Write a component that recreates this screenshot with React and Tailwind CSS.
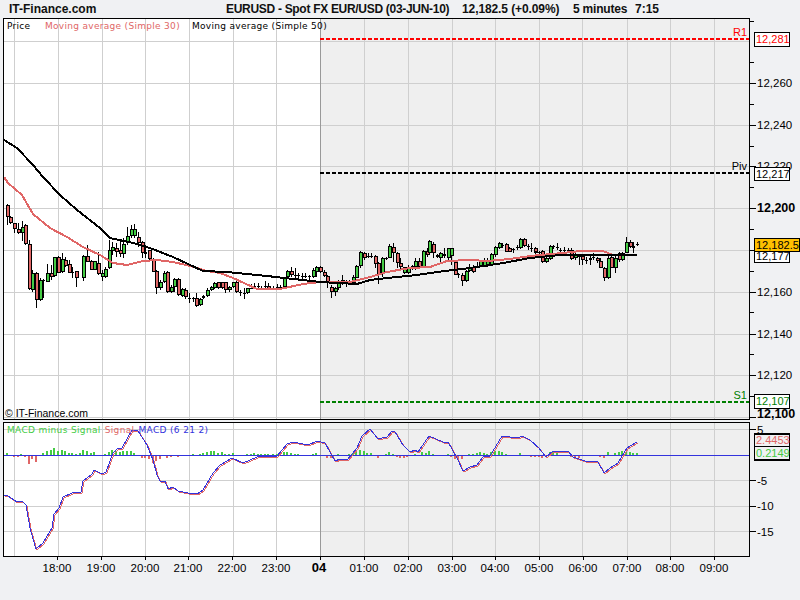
const GREEN = '#44cc44'
const RED = '#e06666'
const BLUE = '#3333dd'

// candles traced from the chart: [x, wickTop, wickBottom, bodyTop, bodyBottom, colour], in 3x crop units
const candlesA = [
  [22,28,90,30,65,'r'],[31,62,88,66,85,'r'],[43,85,115,85,103,'r'],[55,85,118,103,115,'r'],[65,78,138,95,115,'g'],[76,88,150,90,148,'r'],
  [88,135,285,148,283,'r'],[97,225,290,235,285,'g'],[109,230,338,233,316,'r'],[121,250,318,254,316,'g'],[130,252,310,254,258,'g'],[142,207,260,235,260,'g'],
  [154,210,255,235,245,'r'],[163,185,245,187,243,'g'],[175,183,235,187,233,'r'],[185,175,235,192,230,'g'],[196,185,215,194,213,'r'],[208,195,235,208,233,'r'],
  [217,215,250,230,235,'k'],[229,230,275,229,248,'r'],[250,180,258,183,250,'g'],[262,150,202,183,200,'r'],[274,195,225,199,225,'r'],[283,197,225,199,225,'g'],
  [295,172,240,203,236,'r'],[307,225,258,235,245,'g'],[316,215,250,222,245,'g'],[328,135,222,166,220,'g'],[337,140,180,156,168,'g'],[349,145,185,160,170,'r'],
  [361,138,185,166,176,'r'],[370,130,190,147,176,'g'],[382,97,150,124,145,'g'],[394,90,130,103,122,'g'],[403,88,130,103,122,'g'],[415,110,155,127,145,'r'],
  [427,137,190,142,175,'r'],[436,150,190,170,177,'g'],[448,165,200,165,193,'r'],[460,190,232,193,230,'r'],[469,225,298,227,280,'r'],[481,255,285,262,280,'g'],
  [491,228,265,233,260,'g'],[502,228,293,232,290,'r'],[514,270,295,277,290,'g'],[523,250,290,253,275,'g'],[535,250,302,253,300,'r'],[547,280,305,283,302,'g'],
  [556,280,312,285,305,'r'],[568,295,325,310,312,'k'],[580,305,320,310,312,'k'],[589,295,337,310,332,'r'],[601,310,332,313,330,'g'],[610,300,312,304,310,'g'],
  [622,280,305,284,304,'g'],[634,272,288,275,285,'g'],[643,260,282,265,280,'g'],[655,260,282,262,280,'r'],[666,260,282,262,280,'r'],[676,262,295,262,285,'r'],
  [688,272,290,275,285,'g'],[700,260,280,262,275,'g'],[709,255,295,262,292,'r'],[721,285,303,292,294,'k'],[733,280,312,293,295,'k'],[742,278,296,280,295,'g'],
  [754,268,282,278,280,'k'],[763,265,280,272,274,'k'],[775,265,280,272,274,'k'],[784,272,282,278,280,'k'],[796,258,282,272,274,'k'],[805,265,285,272,282,'r'],
]
const candlesB = [
  [8,183,192,188,190,'k'],[20,178,192,185,187,'k'],[31,180,190,185,187,'k'],[43,155,188,157,186,'g'],[52,135,160,138,155,'g'],[64,127,155,138,150,'r'],
  [76,130,158,150,152,'k'],[85,145,162,150,152,'k'],[97,145,165,153,155,'k'],[106,143,160,152,154,'k'],[118,150,168,154,156,'k'],[130,130,160,135,155,'g'],
  [139,122,155,127,140,'g'],[151,122,145,127,140,'r'],[163,135,155,140,152,'r'],[172,150,190,152,175,'r'],[184,180,218,187,200,'r'],[196,185,212,190,200,'g'],
  [205,165,195,175,190,'g'],[217,150,180,165,175,'r'],[229,165,185,172,175,'k'],[238,165,178,170,175,'g'],[250,150,178,157,175,'g'],[259,120,160,123,158,'g'],
  [271,77,130,80,124,'g'],[283,80,105,85,100,'r'],[295,85,100,92,94,'k'],[304,85,100,92,94,'k'],[316,90,130,93,117,'r'],[325,110,178,115,150,'r'],
  [337,95,155,98,145,'g'],[349,95,105,98,100,'k'],[358,58,100,62,98,'g'],[370,55,110,67,85,'r'],[382,80,130,85,115,'r'],[391,100,135,115,125,'r'],
  [403,125,147,125,145,'g'],[415,120,148,125,145,'g'],[427,120,135,122,130,'r'],[436,100,135,107,125,'g'],[448,100,130,107,125,'r'],[460,75,130,77,127,'g'],
  [470,70,95,77,90,'r'],[478,45,90,48,85,'g'],[490,50,100,57,85,'r'],[502,88,100,90,97,'k'],[511,80,112,85,100,'g'],[523,68,98,88,92,'k'],
  [535,68,105,70,100,'g'],[544,68,120,70,92,'g'],[556,108,150,110,150,'r'],[565,145,160,148,150,'k'],[577,145,183,150,168,'r'],[589,135,170,138,168,'g'],
  [598,118,140,125,138,'g'],[610,120,145,125,140,'r'],[622,110,130,122,125,'k'],[631,105,125,108,122,'g'],[643,100,125,107,122,'g'],[652,100,125,108,122,'g'],
  [664,85,122,87,120,'g'],[676,62,95,67,90,'g'],[688,50,72,55,70,'g'],[697,55,70,60,62,'k'],[709,55,82,57,80,'r'],[718,65,82,70,80,'r'],
  [730,70,85,72,74,'k'],[742,60,75,67,70,'k'],[751,40,72,42,70,'g'],[763,38,65,42,62,'r'],[775,58,75,62,64,'k'],[784,62,82,70,72,'k'],[796,65,90,70,85,'r'],
]
const candlesC = [
  [4,55,80,68,70,'k'],[16,68,85,70,82,'r'],[28,78,90,80,82,'k'],[37,75,115,78,112,'r'],[49,90,113,100,112,'g'],[61,60,105,63,103,'g'],
  [70,60,72,63,65,'k'],[82,55,75,65,68,'k'],[91,70,85,75,77,'k'],[103,65,85,75,77,'k'],[115,70,85,75,82,'g'],[124,70,105,75,103,'r'],
  [136,85,105,90,100,'g'],[148,88,120,92,94,'k'],[157,88,120,92,105,'r'],[169,95,118,105,107,'k'],[181,90,120,98,106,'k'],[190,85,105,97,100,'k'],
  [202,95,115,99,108,'r'],[211,100,130,108,128,'r'],[223,125,167,130,160,'r'],[235,90,162,98,160,'g'],[244,90,130,95,130,'r'],[256,90,145,98,130,'g'],
  [268,80,110,85,105,'r'],[277,80,108,85,105,'g'],[289,37,85,52,83,'g'],[301,45,70,52,67,'r'],[310,52,85,63,70,'k'],[322,52,62,58,60,'k'],
]

const toPage = (list, ox, oy) =>
  list.map(([x, a, b, c, d, col]) => ({
    x: Math.round(ox + x / 3),
    wt: Math.round(oy + a / 3),
    wb: Math.round(oy + b / 3),
    bt: Math.round(oy + c / 3),
    bb: Math.round(oy + d / 3),
    col,
  }))

const candles = [
  ...toPage(candlesA, 0, 195),
  ...toPage(candlesB, 270, 225),
  ...toPage(candlesC, 530, 225),
]

const ma50 = '4,140 17,148 33,165 43,177 60,195 77,210 100,228 110,238 133,243 150,248 173,257 203,271 227,272 267,276 320,282 357,284 370,280 387,278 417,275 437,272 470,268 503,263 530,258 560,255 637,255'
const ma30 = '4,177 8,183 22,195 33,214 50,228 67,237 83,247 100,255 113,263 127,265 143,261 157,260 173,262 190,266 207,271 220,273 233,278 257,289 280,289 303,284 320,282 350,282 370,277 387,272 410,268 430,267 447,261 470,260 487,261 510,259 530,256 563,253 580,251 603,251 613,255 637,255'

const macdA = [[12,300],[25,302],[50,320],[65,317],[78,330],[90,400],[108,462],[130,445],[155,400],[163,358],[178,340],[190,305],[215,295],[242,290],[250,258],[275,238],[283,225],[305,237],[318,232],[340,175],[350,163],[365,158],[395,105],[415,108],[440,150],[460,195],[470,240],[480,258],[495,258],[505,282],[520,275],[535,288],[565,295],[590,298],[610,285],[640,235],[660,210],[695,190],[730,205],[770,185],[810,183]]
const macdB = [[22,183],[50,148],[70,140],[115,150],[140,137],[165,145],[195,198],[210,192],[230,195],[260,160],[275,122],[300,103],[325,133],[350,125],[365,108],[375,110],[400,150],[420,170],[435,165],[445,172],[478,122],[520,142],[535,140],[560,190],[578,227],[600,215],[620,210],[640,187],[660,183],[695,122],[745,130],[755,122],[780,135],[800,155]]
const macdC = [[0,180],[25,200],[48,232],[70,212],[115,214],[130,230],[165,243],[205,245],[222,280],[240,263],[265,250],[290,205],[320,185]]
const macd = [
  ...macdA.map(([x, y]) => [x / 3, 395 + y / 3]),
  ...macdB.map(([x, y]) => [270 + x / 3, 395 + y / 3]),
  ...macdC.map(([x, y]) => [530 + x / 3, 380 + y / 3]),
]
  .map(([x, y]) => `${Math.round(x)},${Math.round(y)}`)
  .join(' ')

// histogram bars: [x in crop units, height in px], positive is up
const barsA = [[22,2],[43,-1],[55,-1],[64,1],[76,-1],[88,-8],[97,-3],[109,-6],[130,2],[142,4],[154,5],[163,7],[175,4],[185,5],[196,4],[208,2],[217,2],[229,1],[241,2],[250,5],[262,4],[274,2],[283,3],[316,1],[328,3],[337,5],[349,4],[361,3],[370,4],[382,4],[394,4],[403,2],[427,-2],[436,-2],[448,-3],[460,-7],[469,-5],[481,-3],[502,-2],[514,-1],[535,-1],[580,1],[601,1],[610,2],[622,3],[634,4],[643,4],[655,2],[666,3],[676,1],[688,1],[700,2],[742,1],[754,1],[763,2],[775,1],[784,1],[796,1],[805,1]]
const barsB = [[8,1],[20,1],[43,3],[52,3],[64,2],[76,1],[85,1],[130,1],[139,2],[172,-2],[184,-2],[205,1],[238,1],[250,2],[259,3],[271,5],[283,4],[292,2],[304,2],[325,-2],[349,1],[358,3],[370,1],[382,-1],[391,-2],[403,-2],[412,-1],[436,1],[457,3],[469,2],[478,4],[490,1],[535,1],[544,-1],[556,-3],[565,-4],[577,-3],[598,1],[610,1],[622,2],[631,3],[643,2],[652,1],[664,3],[676,4],[688,4],[697,3],[709,1],[751,2],[796,-1]]
const barsC = [[4,-1],[16,-1],[28,-1],[37,-2],[49,-1],[61,3],[70,3],[82,2],[124,-1],[136,-1],[148,-2],[211,-1],[223,-2],[235,3],[256,2],[268,3],[277,4],[289,3],[301,3],[310,2],[322,2]]
const bars = [
  ...barsA.map(([x, h]) => [Math.round(x / 3), h]),
  ...barsB.map(([x, h]) => [Math.round(270 + x / 3), h]),
  ...barsC.map(([x, h]) => [Math.round(530 + x / 3), h]),
]

const gridX = [14, 58, 102, 145, 189, 233, 276, 364, 408, 452, 495, 539, 582, 627, 670, 714]
const gridY = [41, 83, 125, 166, 208, 250, 292, 334, 375, 417]
const hours = [
  [57, '18:00'], [101, '19:00'], [145, '20:00'], [188, '21:00'], [232, '22:00'], [276, '23:00'],
  [364, '01:00'], [408, '02:00'], [452, '03:00'], [495, '04:00'], [539, '05:00'], [583, '06:00'], [627, '07:00'], [670, '08:00'], [714, '09:00'],
]

function Candle({ c }) {
  const fill = c.col === 'r' ? RED : c.col === 'g' ? GREEN : '#000'
  const tall = c.bb - c.bt > 2
  return (
    <g>
      <rect x={c.x} y={c.wt} width="1" height={c.wb - c.wt} fill="#000" />
      <rect x={c.x - 1} y={c.bt} width={tall ? 4 : 3} height={Math.max(c.bb - c.bt, 1)} fill="#000" />
      {tall && <rect x={c.x} y={c.bt + 1} width="2" height={c.bb - c.bt - 2} fill={fill} />}
    </g>
  )
}

function ValueBox({ className, children }) {
  return (
    <div className={`absolute left-[4px] flex items-center border border-black pl-[1px] text-[11px] leading-none ${className}`}>
      {children}
    </div>
  )
}

export default function App() {
  return (
    <div className="flex h-[600px] w-[800px] flex-col overflow-hidden bg-[#f0f1f3] font-['Liberation_Sans',sans-serif] text-black">
      <header className="flex h-[18px] items-center text-[12px] font-bold leading-none text-[#111]">
        <span className="ml-[9px] w-[217px]">IT-Finance.com</span>
        <span className="w-[236px] tracking-[-0.3px]">EURUSD - Spot FX EUR/USD (03-JUN-10)</span>
        <span className="w-[111px] tracking-[-0.1px]">12,182.5 (+0.09%)</span>
        <span className="w-[62px] tracking-[-0.2px]">5 minutes</span>
        <span>7:15</span>
      </header>

      {/* price pane */}
      <div className="flex pl-[3px]">
        <div className="relative h-[402px] w-[747px] border border-black bg-white">
          <svg className="block h-[400px] w-[745px]" viewBox="4 19 745 400" shapeRendering="crispEdges">
            <rect x="320" y="19" width="429" height="400" fill="#efefef" />
            {gridX.map((x) => <rect key={x} x={x} y="19" width="1" height="400" fill="#cfcfcf" />)}
            {gridY.map((y) => <rect key={y} x="4" y={y} width="745" height="1" fill="#cfcfcf" />)}
            <rect x="320" y="19" width="1" height="400" fill="#999" />
            <line x1="320" x2="749" y1="38.5" y2="38.5" stroke="#ff0000" strokeWidth="2" strokeDasharray="4 2" />
            <line x1="320" x2="749" y1="173" y2="173" stroke="#000" strokeWidth="2" strokeDasharray="4 2" />
            <line x1="320" x2="749" y1="402" y2="402" stroke="#008000" strokeWidth="2" strokeDasharray="4 2" />
            {candles.map((c, i) => <Candle key={i} c={c} />)}
            <polyline points={ma30} fill="none" stroke={RED} strokeWidth="2" />
            <polyline points={ma50} fill="none" stroke="#000" strokeWidth="2" />
          </svg>
          <div className="absolute left-[3px] top-[1px] flex font-['DejaVu_Sans',sans-serif] text-[9px] leading-[12px] tracking-[0.3px]">
            <span className="w-[38px]">Price</span>
            <span className="w-[147px] text-[#e06666]">Moving average (Simple 30)</span>
            <span>Moving average (Simple 50)</span>
          </div>
          <span className="absolute bottom-[0px] left-[1px] text-[10.5px] leading-[12px]">© IT-Finance.com</span>
          <span className="absolute right-[2px] top-[7px] text-[11px] leading-[12px] text-[#ff0000]">R1</span>
          <span className="absolute right-[2px] top-[141px] text-[11px] leading-[12px]">Piv</span>
          <span className="absolute right-[2px] top-[370px] text-[11px] leading-[12px] text-[#008000]">S1</span>
        </div>
        <div className="relative h-[402px] w-[50px]">
          <svg className="block h-[402px] w-[50px]" viewBox="749 18 50 402" shapeRendering="crispEdges">
            {[21, 62, 104, 146, 187, 229, 271, 312, 354, 396].map((y) => <rect key={y} x="749" y={y} width="4" height="1" fill="#000" />)}
            {[83, 125, 166, 208, 250, 292, 334, 375, 417].map((y) => <rect key={y} x="749" y={y} width="6" height="1" fill="#000" />)}
            <g fontSize="11.5" fontFamily="Liberation Sans, sans-serif" shapeRendering="auto">
              <text x="756" y="87">12,260</text>
              <text x="756" y="129">12,240</text>
              <text x="756" y="170">12,220</text>
              <text x="756" y="212" fontSize="12.5" fontWeight="bold">12,200</text>
              <text x="756" y="296">12,160</text>
              <text x="756" y="338">12,140</text>
              <text x="756" y="379">12,120</text>
              <text x="756" y="418" fontSize="12.5" fontWeight="bold">12,100</text>
            </g>
          </svg>
          <ValueBox className="top-[14px] h-[15px] w-[36px] bg-white text-[#ff0000]">12,281</ValueBox>
          <ValueBox className="top-[149px] h-[14px] w-[36px] bg-white">12,217</ValueBox>
          <ValueBox className="top-[232px] h-[13px] w-[36px] bg-white">12,177</ValueBox>
          <ValueBox className="top-[220px] h-[14px] w-[46px] bg-[#ffc000]">12,182.5</ValueBox>
          <ValueBox className="top-[376px] h-[15px] w-[36px] bg-white text-[#008000]">12,107</ValueBox>
        </div>
      </div>

      {/* macd pane */}
      <div className="mt-[2px] flex pl-[3px]">
        <div className="relative h-[135px] w-[747px] border border-black bg-white">
          <svg className="block h-[133px] w-[745px]" viewBox="4 423 745 133" shapeRendering="crispEdges">
            <rect x="320" y="423" width="429" height="133" fill="#efefef" />
            {gridX.map((x) => <rect key={x} x={x} y="423" width="1" height="133" fill="#cfcfcf" />)}
            {[429, 480, 506, 531].map((y) => <rect key={y} x="4" y={y} width="745" height="1" fill="#cfcfcf" />)}
            <rect x="320" y="423" width="1" height="133" fill="#999" />
            {bars.map(([x, h], i) =>
              h > 0
                ? <rect key={i} x={x - 1} y={455 - h} width="2" height={h} fill={GREEN} />
                : <rect key={i} x={x - 1} y="456" width="2" height={-h} fill={RED} />
            )}
            <rect x="4" y="455" width="745" height="1" fill={BLUE} />
            <polyline points={macd} fill="none" stroke={RED} strokeWidth="1" transform="translate(1 1)" />
            <polyline points={macd} fill="none" stroke={BLUE} strokeWidth="1" />
          </svg>
          <div className="absolute left-[3px] top-[1px] flex font-['DejaVu_Sans',sans-serif] text-[9px] leading-[12px] tracking-[0.35px]">
            <span className="mr-[4px] text-[#44cc44]">MACD minus Signal</span>
            <span className="mr-[4px] text-[#e06666]">Signal</span>
            <span className="text-[#3333dd]">MACD (6 21 2)</span>
          </div>
        </div>
        <div className="relative h-[135px] w-[50px]">
          <svg className="block h-[135px] w-[50px]" viewBox="749 422 50 135" shapeRendering="crispEdges">
            {[429, 480, 506, 531].map((y) => <rect key={y} x="749" y={y} width="6" height="1" fill="#000" />)}
            <g fontSize="11.5" fontFamily="Liberation Sans, sans-serif" shapeRendering="auto">
              <text x="756" y="434">5</text>
              <text x="756" y="485">-5</text>
              <text x="756" y="510">-10</text>
              <text x="756" y="536">-15</text>
            </g>
          </svg>
          <ValueBox className="top-[11px] h-[14px] w-[36px] border-t-2 bg-[#f0f1f3] text-[#e06666]">2.4453</ValueBox>
          <ValueBox className="top-[24px] h-[15px] w-[36px] border-b-2 bg-[#f0f1f3] text-[#44cc44]">0.2149</ValueBox>
        </div>
      </div>

      {/* time axis */}
      <svg className="block h-[43px] w-[800px]" viewBox="0 557 800 43">
        <g shapeRendering="crispEdges">
          {hours.map(([x]) => <rect key={x} x={x} y="557" width="1" height="3" fill="#000" />)}
          <rect x="320" y="557" width="1" height="3" fill="#000" />
        </g>
        <g fontSize="11.5" fontFamily="Liberation Sans, sans-serif" textAnchor="middle">
          {hours.map(([x, t]) => <text key={x} x={x} y="572">{t}</text>)}
          <text x="319" y="572" fontSize="13" fontWeight="bold">04</text>
        </g>
      </svg>
    </div>
  )
}
